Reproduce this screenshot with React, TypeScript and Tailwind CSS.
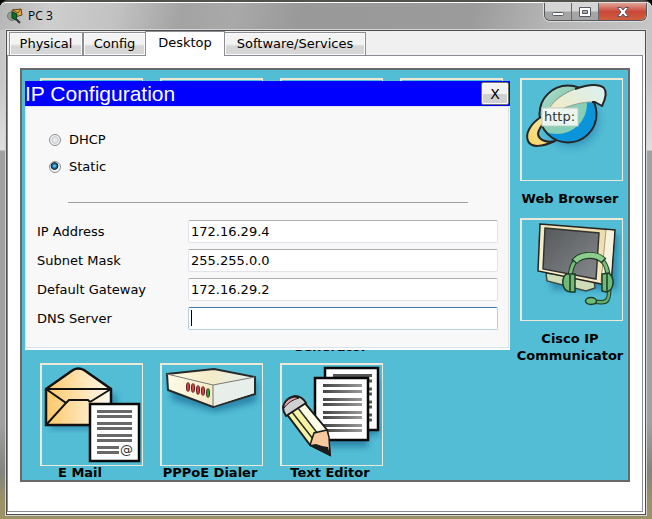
import React from "react";

const svgText = { fontFamily: '"DejaVu Sans", sans-serif' };

function BrowserIcon() {
  return (
    <svg viewBox="0 0 100 100" className="h-full w-full font-normal" aria-hidden="true">
      <defs>
        <radialGradient id="halo">
          <stop offset="0.6" stopColor="#247fae" stopOpacity="0.6" />
          <stop offset="1" stopColor="#53bdd5" stopOpacity="0" />
        </radialGradient>
        <linearGradient id="globe" x1="0" y1="0" x2="1" y2="1">
          <stop offset="0" stopColor="#d7efe6" />
          <stop offset="0.5" stopColor="#8fcdb6" />
          <stop offset="1" stopColor="#7ed0b4" />
        </linearGradient>
        <linearGradient id="ring" x1="0" y1="1" x2="1" y2="0">
          <stop offset="0" stopColor="#f8d560" />
          <stop offset="0.5" stopColor="#f0ebc6" />
          <stop offset="1" stopColor="#d8f1f4" />
        </linearGradient>
        <clipPath id="globeClip"><circle cx="46" cy="34" r="28" /></clipPath>
      </defs>
      <circle cx="50" cy="40" r="37" fill="url(#halo)" />
      <circle cx="46" cy="34" r="28" fill="#0a94da" />
      <g clipPath="url(#globeClip)">
        <circle cx="35" cy="24" r="30" fill="url(#globe)" />
      </g>
      <circle cx="46" cy="34" r="28.5" fill="none" stroke="#262626" strokeWidth="2" />
      <path d="M19 37C8 44 3 54 6 61C9 68 20 67 33 61C24 63 17 60 16 54C16 49 21 44 26 38C36 29 52 23 70 22L73 22L80 26C83 20 86 13 82 8C76 3 60 6 47 12C36 18 27 25 19 37Z" fill="url(#ring)" />
      <path d="M70 22L73 22L80 26C83 20 86 13 82 8C76 3 64 5 53 9M19 37C8 44 3 54 6 61C9 68 20 67 33 61C24 63 17 60 16 54C16 51 18 48 20 45" fill="none" stroke="#262626" strokeWidth="2" strokeLinejoin="round" />
      <path d="M53 9C40 14 34 19 28 27M70 22C60 22 50 25 42 28" fill="none" stroke="#8b9a92" />
      <rect x="20" y="28" width="36" height="18" fill="#f5f9f6" fillOpacity="0.9" stroke="#b9cdc8" />
      <text x="22" y="41" fontSize="13" style={svgText} fill="#333">http:</text>
    </svg>
  );
}

function CommunicatorIcon() {
  return (
    <svg viewBox="0 0 100 100" className="h-full w-full" aria-hidden="true">
      <defs>
        <linearGradient id="screen" x1="0" y1="0" x2="1" y2="1">
          <stop offset="0" stopColor="#56595c" />
          <stop offset="1" stopColor="#85898c" />
        </linearGradient>
        <linearGradient id="bezel" x1="0" y1="1" x2="1" y2="0">
          <stop offset="0" stopColor="#fdf6d4" />
          <stop offset="1" stopColor="#ead9a4" />
        </linearGradient>
        <filter id="soft"><feGaussianBlur stdDeviation="3" /></filter>
      </defs>
      <path d="M22 12L97 14L95 70L30 70Z" fill="#1f7099" opacity="0.6" filter="url(#soft)" />
      <path d="M24 53L25 61L64 71L73 68L72 60Z" fill="#cfdcb8" stroke="#3a4b42" strokeWidth="1.5" />
      <path d="M18 4L93 10L89 66L16 51Z" fill="url(#bezel)" stroke="#242424" strokeWidth="1.5" />
      <path d="M84 10L92 11L88 65L79 63Z" fill="#f7f2dd" />
      <path d="M84 10L79 62" stroke="#a79b77" />
      <path d="M23 8L77 13L74 59L21 49Z" fill="url(#screen)" stroke="#333" strokeWidth="1.5" />
      <path d="M48 58C49 41 57 35 67 35C79 35 86 44 86 58" fill="none" stroke="#1d3b25" strokeWidth="5" />
      <path d="M48 58C49 41 57 35 67 35C79 35 86 44 86 58" fill="none" stroke="#77bb7b" strokeWidth="3" />
      <path d="M52 42C58 34 74 33 82 41" fill="none" stroke="#1d3b25" strokeWidth="7" />
      <path d="M53 41C59 34 74 33 81 40" fill="none" stroke="#8ccd8e" strokeWidth="5" />
      <path d="M87 65C88 81 85 83 77 82L70 82" fill="none" stroke="#1d3b25" strokeWidth="4.5" />
      <path d="M87 65C88 81 85 83 77 82L70 82" fill="none" stroke="#65ac6d" strokeWidth="2.5" />
      <ellipse cx="69" cy="81" rx="5.5" ry="3.5" fill="#72bd76" stroke="#1d3b25" strokeWidth="1.5" />
      <path d="M49 54L44 54Q40 58 41 65Q43 72 49 72L53 72L53 54Z" fill="#71b976" stroke="#1d3b25" strokeWidth="1.5" />
      <path d="M48 55V72" stroke="#1d3b25" strokeWidth="1.5" />
      <path d="M80 54L87 53Q92 58 91 64Q90 71 84 72L80 71Z" fill="#71b976" stroke="#1d3b25" strokeWidth="1.5" />
      <path d="M85 54V71" stroke="#1d3b25" strokeWidth="1.5" />
    </svg>
  );
}

function MailIcon() {
  return (
    <svg viewBox="0 0 100 100" className="h-full w-full font-normal" aria-hidden="true">
      <defs>
        <linearGradient id="envelope">
          <stop offset="0" stopColor="#ffc868" />
          <stop offset="1" stopColor="#fffaf0" />
        </linearGradient>
        <filter id="mailSoft"><feGaussianBlur stdDeviation="3" /></filter>
      </defs>
      <path d="M8 29H75V64H8Z" fill="#1f7099" opacity="0.6" filter="url(#mailSoft)" />
      <path d="M4 24L31 5Q36 2 42 5L69 24V60H4Z" fill="url(#envelope)" stroke="#111" strokeWidth="2.5" />
      <path d="M4 24H69M4 24L24 38L4 60M69 24L48 37M24 38L27 35H46L48 37" fill="none" stroke="#111" strokeWidth="2" />
      <rect x="48" y="39" width="49" height="57" fill="#fff" stroke="#080808" strokeWidth="2.5" />
      <path d="M55 46.500H90M55 51.500H90M55 58.500H90M55 63.500H90M55 70.500H90M55 75.500H90M55 82.500H77M55 87.500H77" stroke="#696969" strokeWidth="3" />
      <text x="78" y="89" fontSize="13" style={svgText} fill="#333">@</text>
    </svg>
  );
}

function ModemIcon() {
  return (
    <svg viewBox="0 0 100 100" className="h-full w-full" aria-hidden="true">
      <defs>
        <linearGradient id="modem">
          <stop offset="0" stopColor="#fffbe8" />
          <stop offset="0.5" stopColor="#f3ebc8" />
          <stop offset="1" stopColor="#e5f1ef" />
        </linearGradient>
        <filter id="modemSoft"><feGaussianBlur stdDeviation="3" /></filter>
      </defs>
      <path d="M8 14L96 17L94 37L54 47L10 35Z" fill="#1f7099" opacity="0.7" filter="url(#modemSoft)" />
      <path d="M5 9L52 4L93 12V29L51 42L6 25Z" fill="url(#modem)" stroke="#292929" strokeWidth="2" />
      <path d="M52 20L92 13V28L52 41Z" fill="#e8eee9" />
      <path d="M5 9L51 20L93 12M51 20V41" fill="none" stroke="#777" strokeWidth="1" />
      <g stroke="#512020" strokeWidth="1">
        <ellipse cx="26" cy="22" rx="1.5" ry="4.5" fill="#ee4141" />
        <ellipse cx="31" cy="23" rx="1.5" ry="4.5" fill="#ee4141" />
        <ellipse cx="36" cy="25" rx="1.5" ry="4.5" fill="#ee4141" />
        <ellipse cx="41" cy="26" rx="1.5" ry="4.5" fill="#ee4141" />
        <ellipse cx="46" cy="28" rx="1.5" ry="4.5" fill="#27b534" />
      </g>
    </svg>
  );
}

function EditorIcon() {
  return (
    <svg viewBox="0 0 100 100" className="h-full w-full" aria-hidden="true">
      <defs>
        <filter id="editorSoft"><feGaussianBlur stdDeviation="3" /></filter>
        <linearGradient id="rule">
          <stop offset="0" stopColor="#444" />
          <stop offset="1" stopColor="#999" />
        </linearGradient>
      </defs>
      <path d="M36 16H97V70H86V82H45Z" fill="#1f7099" opacity="0.7" filter="url(#editorSoft)" />
      <rect x="43" y="3" width="53" height="62" fill="#fff" stroke="#080808" strokeWidth="2.5" />
      <path d="M51 10.500H90M87 16H90M87 24H90M87 29H90M87 37H90M87 42H90M87 50H90M87 55H90" stroke="#555" strokeWidth="3" />
      <rect x="33" y="13" width="53" height="62" fill="#fff" stroke="#080808" strokeWidth="2.5" />
      <g fill="url(#rule)">
        <rect x="41" y="19" width="39" height="3" /><rect x="41" y="25" width="39" height="3" />
        <rect x="41" y="33" width="39" height="3" /><rect x="41" y="38" width="39" height="3" />
        <rect x="41" y="46" width="39" height="3" /><rect x="41" y="51" width="39" height="3" />
        <rect x="41" y="59" width="39" height="3" /><rect x="41" y="64" width="39" height="3" />
      </g>
      <path d="M4 48L22 37L45 65L48 90L28 80Z" fill="#f6f3a2" stroke="#1c1c1c" strokeWidth="2" />
      <path d="M16 43L22 39L44 65L36 68Z" fill="#fffee6" />
      <path d="M10 47L31 74M16 43L36 69" stroke="#292929" strokeWidth="1.5" />
      <path d="M1 42Q3 33 13 31Q20 31 24 38L4 51Q1 47 1 42Z" fill="#d0cfd2" stroke="#1c1c1c" strokeWidth="2" />
      <path d="M2 40Q5 33 13 32L17 33Q8 35 2 43Z" fill="#e9a2ad" stroke="#1c1c1c" strokeWidth="1" />
      <path d="M28 80L32 68L45 65L47 72L48 90Z" fill="#fac89d" stroke="#1c1c1c" strokeWidth="1.5" />
      <path d="M28 80L34 79L40 81L46 82L48 90Z" fill="#1c1c1c" />
    </svg>
  );
}

function Tile({ label, icon, labelClass = "leading-[17px]" }: { label?: string; icon?: React.ReactNode; labelClass?: string }) {
  return (
    <button type="button" className="flex w-[120px] flex-col items-center justify-start text-[13px] font-bold">
      <span className="ml-[3px] block h-[103px] w-[103px] shrink-0 border border-t-2 border-l-2 border-[#ece9d8]">{icon}</span>
      {label && <span className={`block text-center ${labelClass}`}>{label}</span>}
    </button>
  );
}

function Field({ id, label, value, active = false }: { id: string; label: string; value: string; active?: boolean }) {
  return (
    <div className="flex items-center">
      <label htmlFor={id} className="w-[151px] shrink-0">{label}</label>
      <div className="relative flex-1">
        <input
          id={id}
          defaultValue={value}
          className={`block h-[23px] w-full rounded-xs border bg-white px-[2px] outline-none ${active ? "border-[#b5cfe7] border-t-[#3d7bad]" : "border-[#e2e3ea] border-t-[#abadb3]"}`}
        />
        {active && <span className="absolute top-[3px] left-[3px] h-4 w-px bg-black" />}
      </div>
    </div>
  );
}

function Choice({ label, checked = false }: { label: string; checked?: boolean }) {
  return (
    <label className="flex h-[27px] items-center gap-2">
      <input
        type="radio"
        name="mode"
        defaultChecked={checked}
        className="h-3 w-3 appearance-none rounded-full border border-[#8e8f8f] bg-[radial-gradient(circle,#e6e8ea_0_30%,#c5c9cd_45%,#f4f4f4_60%)] checked:bg-[radial-gradient(circle_at_45%_40%,#6cc5ec_0_8%,#1c6c9c_25%,#0c2c48_42%,#f4f4f4_52%)]"
      />
      {label}
    </label>
  );
}

const tab = "h-[23px] border border-b-0 border-[#8c8e94] bg-linear-to-b from-[#f3f3f3] from-50% to-[#d6d6d6] to-60% inset-shadow-[0_0_0_1px_#fafafa] text-center";

export default function App() {
  return (
    <div className="min-h-screen bg-black font-['DejaVu_Sans',sans-serif] text-[13px] text-black">
      <div className="flex min-h-screen flex-col rounded-t-lg border-t-2 border-[#50524b] bg-[linear-gradient(180deg,#c4c4c4_0,#c8c8c8_80px,#dedede_148px,#a0a2a2_149px,#a0a2a2_420px,#83847c_470px,#9b9268_500px)] px-[6px] pb-[4px]">
        <header className="-mx-[6px] flex h-7 items-start justify-between rounded-t-md border-t border-white bg-[linear-gradient(105deg,#b5b5b5_0,#cecece_8%,#c2c2c2_18%,#a3a3a3_28%,#a9a9a9_36%,#999_46%,#9b9b9b_72%,#b5b5b5_84%,#c6c6c6_100%)] pr-[5px] pl-[7px]">
          <div className="flex h-[25px] items-center gap-[5px] font-['Open_Sans',sans-serif] text-xs">
            <svg viewBox="0 0 16 16" className="h-4 w-4" aria-hidden="true">
              <path d="M5 2L14 1L15 7L8 9Z" fill="#dfa83f" stroke="#604713" />
              <path d="M6 2L11 5L14 1" fill="none" stroke="#705018" />
              <circle cx="5" cy="8" r="4.5" fill="#949b94" stroke="#777" />
              <path d="M5 4L10 6L9 12L5 10Z" fill="#087421" stroke="#103a18" />
              <path d="M9 11L13 15" stroke="#333" strokeWidth="2" />
            </svg>
            <h1>PC 3</h1>
          </div>
          <div className="flex h-[18px] rounded-b-md border border-t-0 border-[#55585a] shadow-[0_0_0_1px_#ddd]">
            <button type="button" aria-label="Minimize" className="flex w-[27px] items-center justify-center rounded-bl-md border-r border-[#66696b] bg-linear-to-b from-[#d5d5d5] from-45% to-[#a5a5a5] to-55%">
              <svg viewBox="0 0 12 4" className="mt-1 h-1 w-3"><rect x="0.5" y="0.5" width="11" height="3" rx="1" fill="#fff" stroke="#555a66" /></svg>
            </button>
            <button type="button" aria-label="Maximize" className="flex w-[27px] items-center justify-center border-r border-[#66696b] bg-linear-to-b from-[#d5d5d5] from-45% to-[#a5a5a5] to-55%">
              <svg viewBox="0 0 12 10" className="h-[10px] w-3"><path d="M.5 .5H11.500V9.500H.5ZM3.500 3.500V6.500H8.500V3.500Z" fill="#fff" fillRule="evenodd" stroke="#555a66" /></svg>
            </button>
            <button type="button" aria-label="Close" className="flex w-[47px] items-center justify-center rounded-br-md bg-linear-to-b from-[#dfa398] via-[#c9483a] via-50% to-[#cf5d3d]">
              <svg viewBox="0 0 12 10" className="h-[10px] w-3"><path d="M.5 .5H4L6 3L8 .5H11.500L8 5L11.500 9.500H8L6 7L4 9.500H.5L4 5Z" fill="#fff" stroke="#54566b" /></svg>
            </button>
          </div>
        </header>

        <main className="flex flex-1 flex-col border border-[#4d4d4d] bg-white shadow-[0_0_0_1px_#d5d5d5]">
          <nav className="flex h-6 items-end bg-[#f0f0f0] pl-[2px]" role="tablist">
            <button type="button" role="tab" className={`${tab} w-[74px]`}>Physical</button>
            <button type="button" role="tab" className={`${tab} w-[62px] border-r-0`}>Config</button>
            <button type="button" role="tab" aria-selected="true" className="relative z-10 -mb-px h-[25px] w-20 self-end border border-b-0 border-[#8c8e94] bg-white pb-[3px] text-center">Desktop</button>
            <button type="button" role="tab" className={`${tab} w-[141px] border-l-0`}>Software/Services</button>
          </nav>
          <section className="mr-[2px] mb-[2px] flex-1 border border-[#898c95] bg-white px-3 pt-3 pb-7">
            <div className="relative border-2 border-[#696969] bg-[#53bdd5]">
              <div className="grid grid-cols-[repeat(5,120px)] grid-rows-[140px_145px_117px] pt-2 pl-2">
                <Tile /><Tile /><Tile /><Tile />
                <Tile label="Web Browser" icon={<BrowserIcon />} labelClass="pt-[9px] leading-[17px]" />
                <Tile /><Tile />
                <Tile label="Traffic Generator" labelClass="px-4 leading-[17px]" />
                <Tile />
                <Tile label="Cisco IP Communicator" icon={<CommunicatorIcon />} labelClass="pt-[9px] leading-[17px]" />
                <Tile label="E Mail" icon={<MailIcon />} labelClass="pr-5 leading-[14px]" />
                <Tile label="PPPoE Dialer" icon={<ModemIcon />} labelClass="leading-[14px]" />
                <Tile label="Text Editor" icon={<EditorIcon />} labelClass="leading-[14px]" />
              </div>

              <div role="dialog" aria-labelledby="dialog-title" className="absolute top-[11px] right-[118px] left-[3px] bg-[#f8f8f8]">
                <div className="flex h-[25px] items-center justify-between bg-[#0000ff]">
                  <h2 id="dialog-title" className="font-['Liberation_Sans',sans-serif] text-[21px] leading-6 text-white">IP Configuration</h2>
                  <button type="button" className="mr-px h-[23px] w-7 rounded-xs border border-[#707070] bg-linear-to-b from-[#f2f2f2] from-50% to-[#d0d0d0] to-55% text-sm leading-5 inset-shadow-[0_0_0_1px_#fcfcfc]">X</button>
                </div>
                <form className="border-r border-b-2 border-white inset-shadow-[0_0_0_1px_#dce3ea] pt-5 pr-[11px] pb-[18px] pl-3">
                  <div className="pl-3">
                    <Choice label="DHCP" />
                    <Choice label="Static" checked />
                  </div>
                  <hr className="mt-[22px] mr-[30px] ml-[31px] border-[#a0a0a0]" />
                  <div className="mt-[17px] flex flex-col gap-[6px]">
                    <Field id="ip" label="IP Address" value="172.16.29.4" />
                    <Field id="mask" label="Subnet Mask" value="255.255.0.0" />
                    <Field id="gateway" label="Default Gateway" value="172.16.29.2" />
                    <Field id="dns" label="DNS Server" value="" active />
                  </div>
                </form>
              </div>
            </div>
          </section>
        </main>
      </div>
    </div>
  );
}
